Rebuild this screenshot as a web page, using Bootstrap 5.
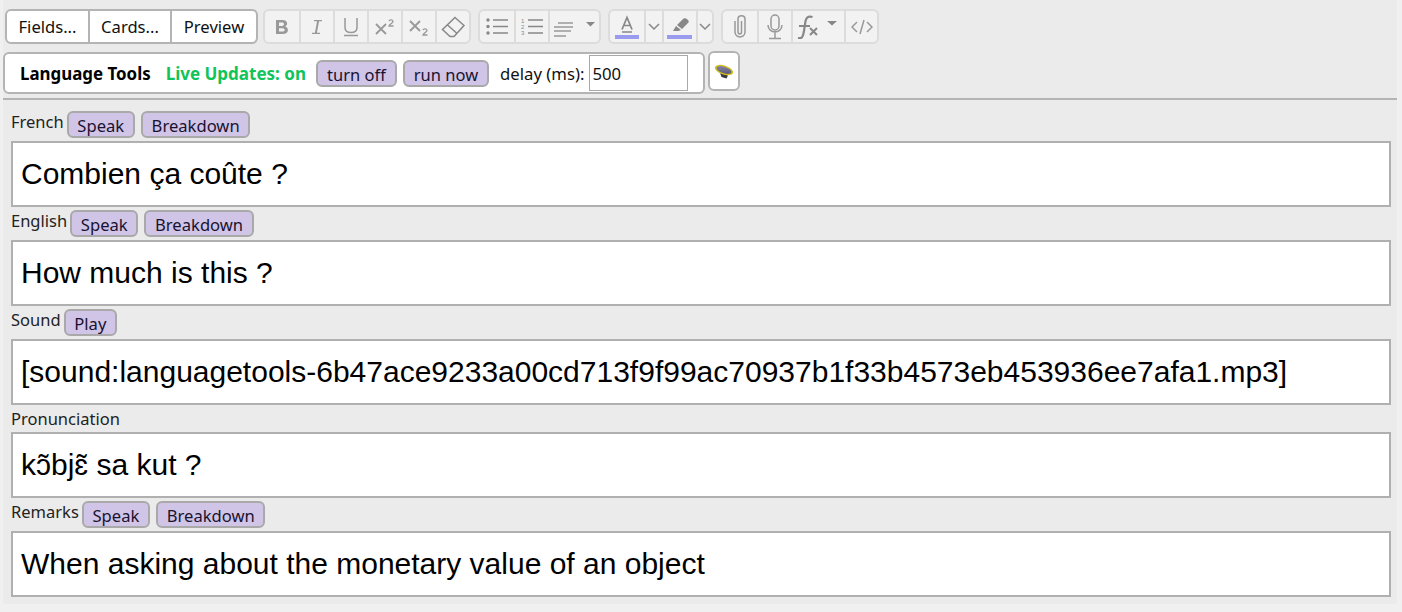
<!doctype html>
<html lang="en">
<head>
<meta charset="utf-8">
<title>Editor</title>
<link href="https://cdn.jsdelivr.net/npm/bootstrap@5.3.0/dist/css/bootstrap.min.css" rel="stylesheet">
<style>
html,body{height:100%}
body{background:#f0f0f0;font-family:"Noto Sans","Open Sans",sans-serif;font-size:16.6px;color:#111;overflow:hidden}
.shell{background:#ebebeb;margin:0 5px 0 3px;height:604px;padding-top:9px}
.tb-one{padding-left:2px;gap:7px;height:35px}
.grp{display:flex;border:2px solid #dcdcdc;border-radius:6px;background:#f2f2f2;height:35px;overflow:hidden;flex:none}
.grp>div{display:flex;align-items:center;justify-content:center;height:100%;border-left:2px solid #dcdcdc;color:#999;flex:none}
.grp>div:first-child{border-left:0}
.grp svg{display:block}
.grp.modes{border-color:#b4b4b4;background:#fff;margin-right:-2px}
.grp.modes>div{border-left-color:#b4b4b4;color:#111;font-size:16.6px;line-height:1;padding-top:2px}
.m1{width:81px}.m2{width:82px}.m3{width:86px}
.b34{width:34px}
.b33{width:33px}
.w-list{width:51px}
.w-fx{width:53px}
.w-chev{width:18px}
.w-chev2{width:16px}
.tb-two{margin-top:8px;gap:2px;height:42px}
.lt-box{width:702px;height:42px;background:#fff;border:2px solid #b4b4b4;border-radius:6px;padding-left:15px;gap:6px;flex:none}
.lt-title{font-weight:700;font-size:16.9px;color:#000;margin-right:9px;padding-top:2px}
.lt-live{font-weight:700;font-size:17px;color:#0fc45a;margin-right:4px;padding-top:2px}
.pill{background:#d0c5e6;border:2px solid #a9a9a9;border-radius:6px;color:#1a1230;font-size:16.6px;line-height:1;height:27px;padding:3px 8.7px 0;display:inline-flex;align-items:center;justify-content:center;flex:none}
.lt-box .pill{margin-top:1px;padding:3px 9px 0;font-size:16.5px}
.lt-delay{margin-left:5px;margin-right:-1px;font-size:16.7px;white-space:nowrap;padding-top:1px}
.delay-in{width:99px;height:36px;border:1px solid #a8a8a8;padding:0 2px;font-size:16.7px;font-family:inherit;color:#111;background:#fff;border-radius:0;outline:0}
.spk-btn{width:32px;height:40px;margin-top:-1px;margin-left:1px;background:#fff;border:2px solid #b4b4b4;border-radius:6px;flex:none}
.rule{height:2px;background:#b4b4b4;margin:4px 0 0 0;width:1394px}
.fields{padding:11px 6px 0 8px}
.flab{height:30px;gap:3px;align-items:flex-start}
.flab.plain{height:24px}
.lab{font-size:16.5px;line-height:21px;color:#222;white-space:nowrap}
.btns{gap:6px}
.fbox{height:66px;background:#fff;border:2px solid #b0b0b0;padding-left:8px;font-family:"Liberation Sans",Arial,sans-serif;font-size:30px;color:#000;line-height:1;margin-bottom:3px;white-space:nowrap}
</style>
</head>
<body>
<div class="shell">
  <div class="d-flex tb-one">
    <div class="grp modes">
      <div class="m1">Fields...</div><div class="m2">Cards...</div><div class="m3">Preview</div>
    </div>
    <div class="grp">
      <div class="b34"><svg width="18" height="18" viewBox="0 0 18 18"><path fill="#999" d="M3 2h6.500c3 0 4.600 1.400 4.600 3.600 0 1.400-.8 2.500-2 3 1.700.4 2.800 1.600 2.800 3.400 0 2.500-1.900 4-5 4H3zm3 2.400v3.500h3c1.300 0 2-.7 2-1.800s-.7-1.700-2-1.700zm0 5.800v3.400h3.300c1.500 0 2.300-.6 2.300-1.700s-.8-1.700-2.300-1.700z"/></svg></div>
      <div class="b34"><svg width="18" height="18" viewBox="0 0 18 18"><path fill="#999" d="M6 2h8v1.200h-2.900L8.900 14.800H12V16H4v-1.200h2.900L9.100 3.200H6z"/></svg></div>
      <div class="b34"><svg width="20" height="20" viewBox="0 0 20 20"><path fill="none" stroke="#999" stroke-width="1.500" d="M4 1v9.500c0 3.500 2.500 5 6 5s6-1.500 6-5V1"/><path stroke="#999" stroke-width="1.500" d="M3 18.500h14"/></svg></div>
      <div class="b34"><svg width="22" height="20" viewBox="0 0 22 20"><path stroke="#999" stroke-width="1.800" d="M2 7l10 10M12 7L2 17"/><path fill="none" stroke="#999" stroke-width="1.300" d="M15 4c.5-1.500 4-1.500 4 .5 0 1.500-3.500 2.500-4 4.500h4.500"/></svg></div>
      <div class="b34"><svg width="22" height="20" viewBox="0 0 22 20"><path stroke="#999" stroke-width="1.800" d="M2 4l10 10M12 4L2 14"/><path fill="none" stroke="#999" stroke-width="1.300" d="M15 13c.5-1.500 4-1.500 4 .5 0 1.500-3.500 2.500-4 4.500h4.500"/></svg></div>
      <div class="b34"><svg width="26" height="24" viewBox="0 0 26 24"><path fill="none" stroke="#888" stroke-width="1.500" d="M15 2.500l9 8-10 11h-4l-7.500-7zM7 9.500l9.500 8.500"/></svg></div>
    </div>
    <div class="grp">
      <div class="b34"><svg width="24" height="20" viewBox="0 0 24 20"><g fill="#888"><circle cx="3" cy="3" r="1.700"/><circle cx="3" cy="9.500" r="1.700"/><circle cx="3" cy="16" r="1.700"/></g><path stroke="#888" stroke-width="1.400" d="M8 3h15M8 9.500h15M8 16h15"/></svg></div>
      <div class="b34"><svg width="24" height="20" viewBox="0 0 24 20"><text x="1" y="6" font-size="6" fill="#888" font-family="Liberation Sans">1</text><text x="1" y="12" font-size="6" fill="#888" font-family="Liberation Sans">2</text><text x="1" y="18" font-size="6" fill="#888" font-family="Liberation Sans">3</text><path stroke="#888" stroke-width="1.400" d="M8 3h15M8 9.500h15M8 16h15"/></svg></div>
      <div class="w-list"><svg width="44" height="22" viewBox="0 0 44 22"><path stroke="#999" stroke-width="1.400" d="M5 7h15M1 11h19M1 15h17M1 20h12"/><path fill="#888" d="M33 6h9l-4.500 4.500z"/></svg></div>
    </div>
    <div class="grp">
      <div class="b34"><svg width="26" height="26" viewBox="0 0 26 26"><path fill="none" stroke="#888" stroke-width="1.700" d="M8 15.500L13 3.500l5 12M9.500 11.500h7"/><path stroke="#888" stroke-width="1.400" d="M8 18h10"/><rect x="1" y="21" width="24" height="4" fill="#9a9aee"/></svg></div>
      <div class="w-chev"><svg width="14" height="10" viewBox="0 0 14 10"><path fill="none" stroke="#888" stroke-width="1.500" d="M2 2l5 5 5-5"/></svg></div>
      <div class="b34"><svg width="26" height="26" viewBox="0 0 26 26"><path fill="#888" d="M10 11l6-6c1-1 3-1 5 1 1 1 1 2 0 3l-6 6zM6 17l3-5 5 4-3 1z"/><rect x="0" y="21" width="25" height="4" fill="#9a9aee"/></svg></div>
      <div class="w-chev2"><svg width="14" height="10" viewBox="0 0 14 10"><path fill="none" stroke="#888" stroke-width="1.500" d="M2 2l5 5 5-5"/></svg></div>
    </div>
    <div class="grp">
      <div class="b34"><svg width="18" height="26" viewBox="0 0 18 26"><path fill="none" stroke="#999" stroke-width="1.500" d="M4 7v11c0 6.500 10 6.500 10 0V5c0-4.500-7-4.500-7 0v13c0 2.500 3.500 2.500 3.500 0V7"/></svg></div>
      <div class="b34"><svg width="22" height="26" viewBox="0 0 22 26"><rect x="7" y="1" width="8" height="15" rx="4" fill="none" stroke="#999" stroke-width="1.500"/><path fill="none" stroke="#999" stroke-width="1.500" d="M4 11c0 9 14 9 14 0M11 18v6M5 24.500h12"/></svg></div>
      <div class="w-fx"><svg width="44" height="24" viewBox="0 0 44 24"><path fill="none" stroke="#888" stroke-width="2.200" d="M1 23c4 1 5-1 6-7l1.500-10c1-4 3-5 7-4M2 11h11"/><path stroke="#888" stroke-width="2" d="M13 13l7 7M20 13l-7 7"/><path fill="#888" d="M30 6h10l-5 4.500z"/></svg></div>
      <div class="b33"><svg width="22" height="18" viewBox="0 0 22 18"><path fill="none" stroke="#999" stroke-width="1.500" d="M6 4L1 9l5 5M16 4l5 5-5 5M13 2L9 16"/></svg></div>
    </div>
  </div>
  <div class="d-flex tb-two">
    <div class="lt-box d-flex align-items-center">
      <span class="lt-title">Language Tools</span>
      <span class="lt-live">Live Updates: on</span>
      <span class="pill">turn off</span>
      <span class="pill">run now</span>
      <span class="lt-delay">delay (ms):</span>
      <input class="delay-in" value="500" aria-label="delay">
    </div>
    <div class="spk-btn d-flex align-items-center justify-content-center">
      <svg width="20" height="16" viewBox="0 0 20 16"><defs><linearGradient id="cone" x1="0" y1="0" x2="1" y2="1"><stop offset="0" stop-color="#8a8ab0"/><stop offset="1" stop-color="#55556a"/></linearGradient></defs><path d="M6 10l8 2.500-1.500 3-5-1.500z" fill="#3a3a3a"/><ellipse cx="10" cy="7" rx="9.500" ry="4.500" transform="rotate(18 10 7)" fill="#d6bc1c"/><ellipse cx="10" cy="7" rx="7.800" ry="3.200" transform="rotate(18 10 7)" fill="url(#cone)"/></svg>
    </div>
  </div>
  <div class="rule"></div>
  <div class="fields">
    <div class="flab d-flex"><span class="lab">French</span><div class="d-flex btns"><span class="pill">Speak</span><span class="pill">Breakdown</span></div></div>
    <div class="fbox d-flex align-items-center">Combien ça coûte ?</div>
    <div class="flab d-flex"><span class="lab">English</span><div class="d-flex btns"><span class="pill">Speak</span><span class="pill">Breakdown</span></div></div>
    <div class="fbox d-flex align-items-center">How much is this ?</div>
    <div class="flab d-flex"><span class="lab">Sound</span><div class="d-flex btns"><span class="pill">Play</span></div></div>
    <div class="fbox d-flex align-items-center">[sound:languagetools-6b47ace9233a00cd713f9f99ac70937b1f33b4573eb453936ee7afa1.mp3]</div>
    <div class="flab plain d-flex"><span class="lab">Pronunciation</span></div>
    <div class="fbox d-flex align-items-center">kɔ̃bjɛ̃ sa kut ?</div>
    <div class="flab d-flex"><span class="lab">Remarks</span><div class="d-flex btns"><span class="pill">Speak</span><span class="pill">Breakdown</span></div></div>
    <div class="fbox d-flex align-items-center">When asking about the monetary value of an object</div>
  </div>
</div>
<script src="https://cdn.jsdelivr.net/npm/bootstrap@5.3.0/dist/js/bootstrap.bundle.min.js"></script>
</body>
</html>
